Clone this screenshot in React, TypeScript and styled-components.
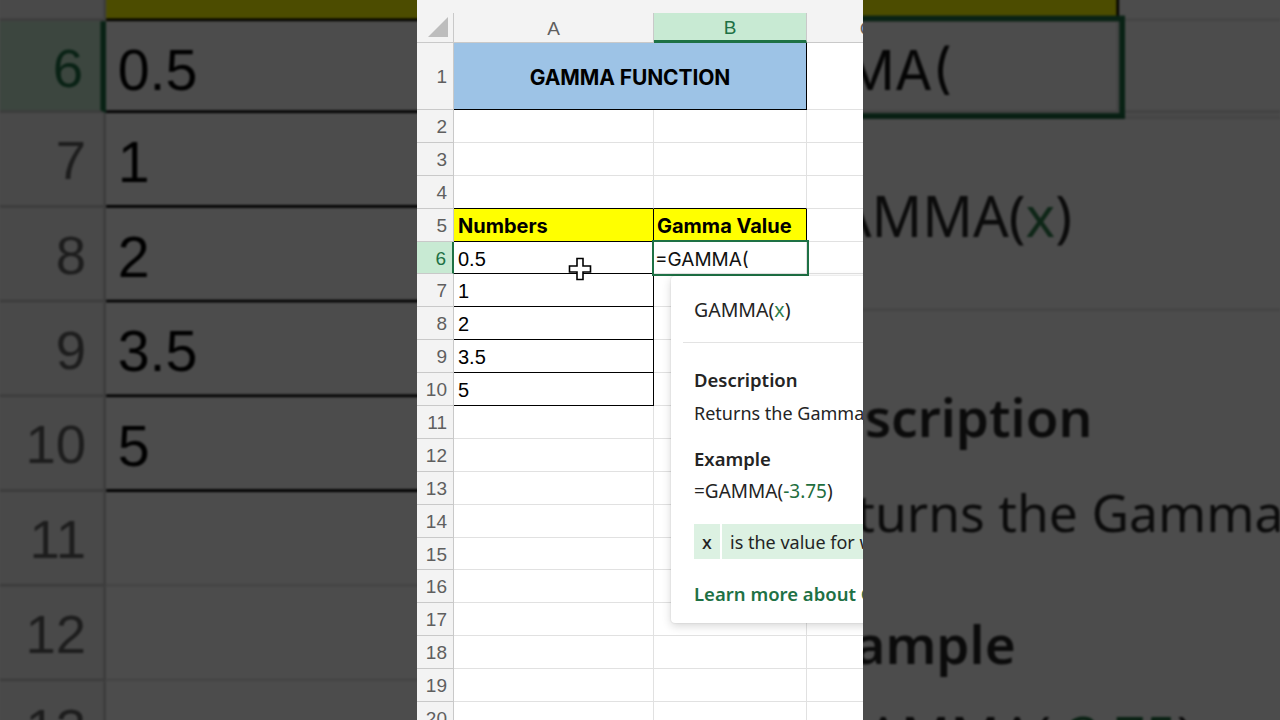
import styled, { createGlobalStyle } from "styled-components";

const GlobalStyle = createGlobalStyle`
  html, body {
    margin: 0;
    padding: 0;
  }
  body {
    width: 1280px;
    height: 720px;
    overflow: hidden;
    background: #4d4d4d;
    font-family: "Liberation Sans", Arial, sans-serif;
  }
`;

const GRID = "#e1e1e1";
const HEAD_LINE = "#c9c9c9";
const INK = "#000";
const GREEN = "#1e7145";

const Stage = styled.div`
  position: relative;
  width: 1280px;
  height: 720px;
  overflow: hidden;
  background: #4d4d4d;
  display: flex;
  justify-content: center;
`;

// the blown-up, dimmed copy of the sheet behind the portrait strip
const Backdrop = styled.div`
  position: absolute;
  inset: 0;
  display: flex;
  justify-content: center;
  align-items: center;
  pointer-events: none;
`;

const Zoomed = styled.div`
  transform: scale(2.87);
  transform-origin: 50% 50%;
  filter: brightness(0.3) blur(0.35px);
`;

const Frame = styled.div`
  position: relative;
  z-index: 1;
  width: 446px;
  height: 720px;
  overflow: hidden;
  background: #fff;
  display: flex;
  flex-direction: column;
`;

const TopStrip = styled.div`
  height: 13px;
  flex: none;
  background: #f3f3f3;
`;

const Grid = styled.div`
  display: grid;
  grid-template-columns: 37px 200px 153px 120px;
  grid-template-rows: 30px 67px repeat(19, 32.9px);
`;

const Corner = styled.div`
  background: #f3f3f3;
  border-right: 1px solid ${HEAD_LINE};
  border-bottom: 1px solid ${HEAD_LINE};
  display: flex;
  align-items: flex-end;
  justify-content: flex-end;
  padding: 0 5px 5px 0;
`;

const ColHead = styled.div<{ $active?: boolean }>`
  background: ${(p) => (p.$active ? "#c8ead3" : "#f3f3f3")};
  color: ${(p) => (p.$active ? GREEN : "#5f5f5f")};
  border-right: 1px solid ${HEAD_LINE};
  border-bottom: ${(p) => (p.$active ? `3px solid ${GREEN}` : `1px solid ${HEAD_LINE}`)};
  display: flex;
  align-items: center;
  justify-content: center;
  font-size: 19px;
  padding-top: 3px;
`;

const RowHead = styled.div<{ $active?: boolean }>`
  background: ${(p) => (p.$active ? "#c8ead3" : "#f3f3f3")};
  color: ${(p) => (p.$active ? GREEN : "#5f5f5f")};
  border-right: ${(p) => (p.$active ? `2px solid ${GREEN}` : `1px solid ${HEAD_LINE}`)};
  border-bottom: 1px solid ${HEAD_LINE};
  display: flex;
  align-items: center;
  justify-content: flex-end;
  padding: 2px 6px 0 0;
  font-size: 19px;
`;

const Cell = styled.div<{
  $bg?: string;
  $r?: string;
  $b?: string;
  $span?: number;
  $center?: boolean;
  $active?: boolean;
}>`
  grid-column: span ${(p) => p.$span ?? 1};
  background: ${(p) => p.$bg ?? "#fff"};
  border-right: 1px solid ${(p) => p.$r ?? GRID};
  border-bottom: 1px solid ${(p) => p.$b ?? GRID};
  display: flex;
  align-items: center;
  justify-content: ${(p) => (p.$center ? "center" : "flex-start")};
  padding-left: ${(p) => (p.$center ? 0 : 4)}px;
  padding-top: 3px;
  font-size: 20px;
  color: #000;
  white-space: nowrap;
  position: relative;
  ${(p) =>
    p.$active &&
    `
    z-index: 2;
    outline: 2px solid ${GREEN};
    outline-offset: 0;
    padding-left: 1px;
  `}
`;

const Title = styled.span`
  font-family: Inter, "Liberation Sans", sans-serif;
  font-weight: 700;
  font-size: 21px;
  letter-spacing: -0.1px;
`;

const Label = styled.span`
  font-family: Inter, "Liberation Sans", sans-serif;
  font-weight: 700;
  font-size: 20px;
`;

const Entry = styled.span`
  font-family: Inter, "Liberation Sans", sans-serif;
  font-size: 19px;
  color: #111;
`;

const Tip = styled.div`
  position: absolute;
  left: 254px;
  top: 276px;
  width: 340px;
  height: 347px;
  z-index: 5;
  background: #fff;
  border-radius: 4px;
  box-shadow: 0 3px 10px rgba(0, 0, 0, 0.16), 0 0 2px rgba(0, 0, 0, 0.14);
  font-family: "Noto Sans", "Open Sans", sans-serif;
  color: #242424;
  white-space: nowrap;
`;

const Signature = styled.div`
  height: 67px;
  box-sizing: border-box;
  margin-left: 12px;
  padding: 21px 0 0 11px;
  border-bottom: 1px solid #e3e3e3;
  font-size: 19.5px;
  line-height: 26px;
`;

const Body = styled.div`
  display: flex;
  flex-direction: column;
  padding-left: 23px;
`;

const Heading = styled.div<{ $gap: number }>`
  margin-top: ${(p) => p.$gap}px;
  font-size: 18.5px;
  font-weight: 600;
  line-height: 24px;
`;

const Line = styled.div<{ $gap: number; $size?: number }>`
  margin-top: ${(p) => p.$gap}px;
  font-size: ${(p) => p.$size ?? 18}px;
  line-height: 24px;
`;

const Arg = styled.span<{ $strong?: boolean }>`
  color: ${(p) => (p.$strong ? "#1f6e3e" : "#2f7d4b")};
`;

const ArgBand = styled.div`
  margin-top: 21px;
  height: 35px;
  display: flex;
  gap: 2px;
  font-size: 18px;
`;

const ArgName = styled.div`
  flex: none;
  width: 26px;
  background: #dcf1e2;
  display: flex;
  align-items: center;
  justify-content: center;
  font-weight: 500;
`;

const ArgText = styled.div`
  flex: 1;
  background: #dcf1e2;
  display: flex;
  align-items: center;
  padding-left: 8px;
`;

const LearnMore = styled.div`
  margin-top: 23px;
  font-size: 18.5px;
  font-weight: 600;
  line-height: 24px;
  color: ${GREEN};
`;

const Cursor = styled.svg`
  position: absolute;
  left: 151px;
  top: 257px;
  z-index: 4;
`;

const rows = Array.from({ length: 19 }, (_, i) => i + 2);
const numbers: Record<number, string> = { 6: "0.5", 7: "1", 8: "2", 9: "3.5", 10: "5" };

const SheetRow = ({ n }: { n: number }) => {
  if (n === 5) {
    return (
      <>
        <RowHead>5</RowHead>
        <Cell $bg="#ffff00" $r={INK} $b={INK}>
          <Label>Numbers</Label>
        </Cell>
        <Cell $bg="#ffff00" $r={INK} $b={INK} style={{ paddingLeft: 3 }}>
          <Label>Gamma Value</Label>
        </Cell>
        <Cell />
      </>
    );
  }

  if (n >= 6 && n <= 10) {
    return (
      <>
        <RowHead $active={n === 6}>{n}</RowHead>
        <Cell $r={INK} $b={INK}>
          {numbers[n]}
        </Cell>
        {n === 6 ? (
          <Cell $active>
            <Entry>=GAMMA(</Entry>
          </Cell>
        ) : (
          <Cell />
        )}
        <Cell />
      </>
    );
  }

  const under = n === 4 ? INK : undefined;
  return (
    <>
      <RowHead>{n}</RowHead>
      <Cell $b={under} />
      <Cell $b={under} />
      <Cell />
    </>
  );
};

const Sheet = () => (
  <Frame>
    <TopStrip />
    <Grid>
      <Corner>
        <svg width="20" height="20" viewBox="0 0 20 20">
          <path d="M20 0 L20 20 L0 20 Z" fill="#bdbdbd" />
        </svg>
      </Corner>
      <ColHead>A</ColHead>
      <ColHead $active>B</ColHead>
      <ColHead>C</ColHead>

      <RowHead>1</RowHead>
      <Cell $span={2} $bg="#9dc3e6" $r={INK} $b={INK} $center>
        <Title>GAMMA FUNCTION</Title>
      </Cell>
      <Cell />

      {rows.map((n) => (
        <SheetRow key={n} n={n} />
      ))}
    </Grid>

    <Cursor width="24" height="24" viewBox="0 0 24 24">
      <path
        d="M9 1.5h6v7.5h7.5v6H15v7.5H9V15H1.5V9H9z"
        fill="#fff"
        stroke="#000"
        strokeWidth="1.6"
      />
    </Cursor>

    <Tip>
      <Signature>
        GAMMA(<Arg>x</Arg>)
      </Signature>
      <Body>
        <Heading $gap={25}>Description</Heading>
        <Line $gap={9}>Returns the Gamma function value.</Line>
        <Heading $gap={22}>Example</Heading>
        <Line $gap={8} $size={19}>
          =GAMMA(<Arg $strong>-3.75</Arg>)
        </Line>
        <ArgBand>
          <ArgName>x</ArgName>
          <ArgText>is the value for which you want to calculate Gamma.</ArgText>
        </ArgBand>
        <LearnMore>Learn more about GAMMA</LearnMore>
      </Body>
    </Tip>
  </Frame>
);

export default function App() {
  return (
    <>
      <GlobalStyle />
      <Stage>
        <Backdrop>
          <Zoomed>
            <Sheet />
          </Zoomed>
        </Backdrop>
        <Sheet />
      </Stage>
    </>
  );
}
